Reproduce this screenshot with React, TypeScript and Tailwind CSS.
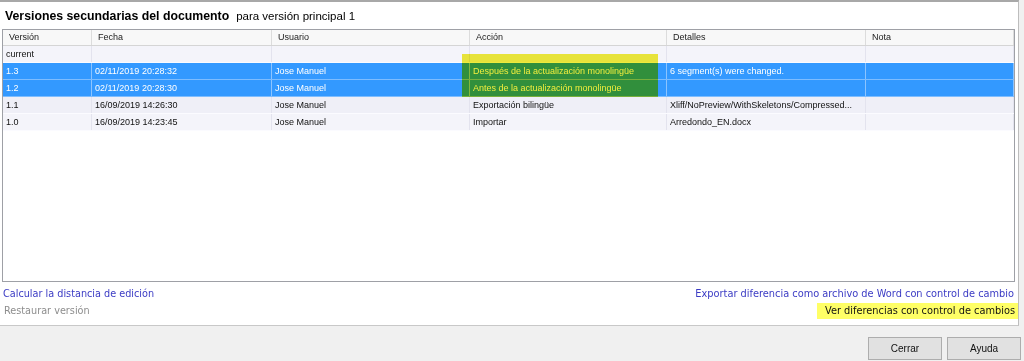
import React from "react";

const cols = [89, 180, 198, 197, 199, 148];
const headers = ["Versión", "Fecha", "Usuario", "Acción", "Detalles", "Nota"];

type Row = { cells: string[]; sel?: boolean; bg: string };
const rows: Row[] = [
  { cells: ["current", "", "", "", "", ""], bg: "bg-[#f4f4fa]" },
  { cells: ["1.3", "02/11/2019 20:28:32", "Jose Manuel", "Después de la actualización monolingüe", "6 segment(s) were changed.", ""], sel: true, bg: "bg-[#3399ff]" },
  { cells: ["1.2", "02/11/2019 20:28:30", "Jose Manuel", "Antes de la actualización monolingüe", "", ""], sel: true, bg: "bg-[#3399ff]" },
  { cells: ["1.1", "16/09/2019 14:26:30", "Jose Manuel", "Exportación bilingüe", "Xliff/NoPreview/WithSkeletons/Compressed...", ""], bg: "bg-[#efeff7]" },
  { cells: ["1.0", "16/09/2019 14:23:45", "Jose Manuel", "Importar", "Arredondo_EN.docx", ""], bg: "bg-[#f4f4fa]" },
];

const cellFont = { fontFamily: '"Liberation Sans", Arial, sans-serif' };
const linkFont = { fontFamily: '"DejaVu Sans", Verdana, sans-serif' };

export default function App() {
  return (
    <div className="relative w-[1024px] h-[361px] bg-[#f0f0f0] flex flex-col overflow-hidden" style={cellFont}>
      <div className="flex h-[326px]">
        <div className="w-[1019px] h-[326px] bg-white border-t-2 border-t-[#a8a8a8] border-r border-r-[#bdbdbd] border-b border-b-[#c8c8c8] flex flex-col">
          <div className="h-[27px] flex items-center pt-[2px] pl-[5px] gap-[7px] text-black">
            <span className="text-[12.3px] font-bold">Versiones secundarias del documento</span>
            <span className="text-[11.5px]">para versión principal 1</span>
          </div>
          <div className="ml-[2px] w-[1013px] h-[253px] border border-[#9ea0a6] bg-white flex flex-col">
            <div className="flex h-[16px] bg-[#f8f8f8] border-b border-b-[#d5d5d5]">
              {headers.map((h, i) => (
                <div
                  key={h}
                  className="h-full flex items-center pt-[1px] text-[9px] text-[#222] pl-[6px] border-r border-r-[#dcdcdc]"
                  style={{ width: cols[i] }}
                >
                  {h}
                </div>
              ))}
            </div>
            {rows.map((r, ri) => (
              <div key={ri} className={`flex h-[17px] border-b ${r.sel ? "border-b-[#7ebdff]" : "border-b-[#fbfbff]"} ${r.bg}`}>
                {r.cells.map((c, i) => (
                  <div
                    key={i}
                    className={`h-full flex items-center pt-[1px] text-[9px] pl-[3px] whitespace-nowrap overflow-hidden border-r ${
                      r.sel ? "text-white border-r-[#8cc4ff]" : "text-[#111] border-r-[#e3e3ee]"
                    }`}
                    style={{ width: cols[i] }}
                  >
                    {c}
                  </div>
                ))}
              </div>
            ))}
          </div>
          <div className="flex justify-between items-center h-[22px] mt-[1px] px-[3px]" style={linkFont}>
            <span className="text-[9.7px] text-[#3b3bc4]">Calcular la distancia de edición</span>
            <span className="text-[9.8px] text-[#3b3bc4] mr-[1px]">Exportar diferencia como archivo de Word con control de cambio</span>
          </div>
          <div className="flex justify-between items-start h-[18px] -mt-[2px] px-[3px]" style={linkFont}>
            <span className="text-[9.7px] text-[#8d8d8d] ml-[1px] h-[16px] flex items-center">Restaurar versión</span>
            <span className="text-[9.8px] text-[#111] bg-[#ffff66] h-[16px] flex items-center pl-[8px] pr-[3px] -mr-[3px]">Ver diferencias con control de cambios</span>
          </div>
        </div>
      </div>
      <div className="flex justify-end gap-[5px] pr-[3px] pt-[11px]">
        <button className="w-[74px] h-[23px] bg-[#e1e1e1] border border-[#adadad] text-[10px] text-[#111]">Cerrar</button>
        <button className="w-[74px] h-[23px] bg-[#e1e1e1] border border-[#adadad] text-[10px] text-[#111]">Ayuda</button>
      </div>
      <div className="absolute left-[462px] top-[54px] w-[196px] h-[43px] bg-[#f2ee3c] mix-blend-multiply pointer-events-none" />
    </div>
  );
}
